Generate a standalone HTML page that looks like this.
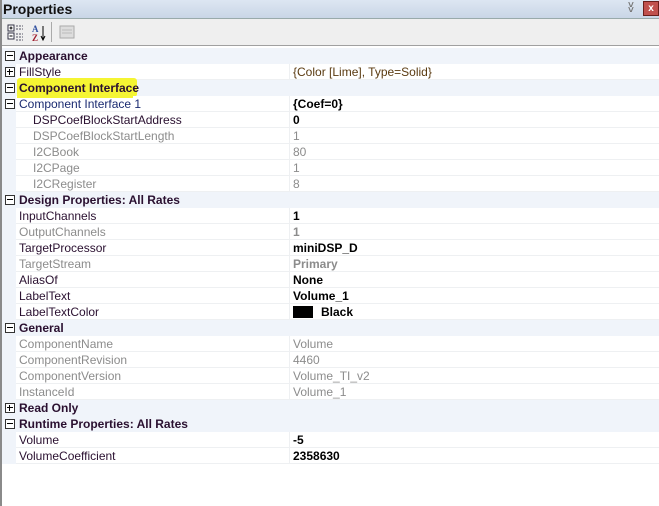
<!DOCTYPE html>
<html><head><meta charset="utf-8"><style>
*{margin:0;padding:0;box-sizing:border-box}
body{width:659px;height:506px;background:#fff;font-family:"Liberation Sans",Arial,sans-serif;font-size:12px;position:relative;overflow:hidden}
#lb{position:absolute;left:0;top:0;width:2px;height:506px;background:#8a8a8a}
#title{position:absolute;left:2px;top:0;width:657px;height:19px;background:linear-gradient(#dde6f2,#c9d6e6);font-size:14px;font-weight:bold;color:#111;padding:1px 0 0 1px;border-bottom:1px solid #9aa}
#tb{position:absolute;left:2px;top:19px;width:657px;height:27px;background:#efefef;border-bottom:1px solid #a0a0a0}
.r{position:absolute;left:2px;width:657px;height:16px;line-height:15px}
.c{background:#f0f4fa;font-weight:bold;color:#000}
.p{background:#fff;border-bottom:1px solid #eef0f2}
.p .g{position:absolute;left:0;top:0;width:14px;height:16px;background:#f0f4fa}
.p .sep{position:absolute;left:287px;top:0;width:1px;height:16px;background:#eef0f2}
.n{position:absolute;left:17px;top:1px;color:#2a1030;white-space:nowrap}
.n2{left:31px}
.v{position:absolute;left:291px;top:1px;color:#000;white-space:nowrap}
.d{color:#8c8c8c!important}
.b{font-weight:bold}
.box{position:absolute;left:3px;top:3px;width:10px;height:10px;border:1px solid #333;background:#fff}
.box:before{content:"";position:absolute;left:1px;top:3px;width:6px;height:1px;background:#000}
.plus:after{content:"";position:absolute;left:3px;top:1px;width:1px;height:6px;background:#000}
</style></head><body>
<div id="lb"></div>
<div id="title">Properties
<div style="position:absolute;left:626px;top:3px;color:#777;font-size:10px;line-height:5px">&#709;<br>&#709;</div>
<div style="position:absolute;left:641px;top:1px;width:16px;height:15px;background:#c0504d;border:1px solid #6a1f1c;color:#fff;font-size:10px;text-align:center;line-height:13px">x</div>
</div>
<div id="tb">
<svg width="80" height="26" style="position:absolute;left:3px;top:1px">
<rect x="3" y="5" width="6" height="6" fill="#fff" stroke="#334"/><rect x="3" y="13" width="6" height="6" fill="#fff" stroke="#334"/>
<path d="M4.5 8h3M6 6.5v3M4.5 16h3" stroke="#000"/>
<path d="M11 6h7M11 9h7M11 14h7M11 17h7M11 20h7" stroke="#556" stroke-dasharray="2 1"/>
<text x="27" y="12" font-size="9" font-family="Liberation Serif" fill="#3050a0" font-weight="bold">A</text>
<text x="27" y="21" font-size="9" font-family="Liberation Serif" fill="#a02030" font-weight="bold">Z</text>
<path d="M38 6v13M36 16l2 4 2-4" stroke="#000" fill="none"/>
<rect x="46" y="2" width="1" height="20" fill="#aaa"/>
<rect x="55" y="6" width="14" height="12" fill="#ddd" stroke="#aaa"/><path d="M57 10h10M57 13h10" stroke="#bbb"/>
</svg>
</div>
<div class="r c" style="top:48px"><div class="box"></div><span class="n">Appearance</span></div>
<div class="r p" style="top:64px"><div class="g"></div><div class="box plus"></div><span class="n">FillStyle</span><div class="sep"></div><span class="v" style="color:#5a3a10">{Color [Lime], Type=Solid}</span></div>
<div class="r c" style="top:80px"><div style="position:absolute;left:15px;top:-2px;width:120px;height:19px;background:#f5f533;border-radius:3px"></div><div class="box"></div><span class="n">Component Interface</span></div>
<div class="r p" style="top:96px"><div class="g"></div><div style="position:absolute;left:15px;top:-1px;width:116px;height:3px;background:#f5f533"></div><div class="box"></div><span class="n" style="color:#1a2a70">Component Interface 1</span><div class="sep"></div><span class="v b">{Coef=0}</span></div>
<div class="r p" style="top:112px"><div class="g"></div><span class="n n2">DSPCoefBlockStartAddress</span><div class="sep"></div><span class="v b">0</span></div>
<div class="r p" style="top:128px"><div class="g"></div><span class="n n2 d">DSPCoefBlockStartLength</span><div class="sep"></div><span class="v d">1</span></div>
<div class="r p" style="top:144px"><div class="g"></div><span class="n n2 d">I2CBook</span><div class="sep"></div><span class="v d">80</span></div>
<div class="r p" style="top:160px"><div class="g"></div><span class="n n2 d">I2CPage</span><div class="sep"></div><span class="v d">1</span></div>
<div class="r p" style="top:176px"><div class="g"></div><span class="n n2 d">I2CRegister</span><div class="sep"></div><span class="v d">8</span></div>
<div class="r c" style="top:192px"><div class="box"></div><span class="n">Design Properties: All Rates</span></div>
<div class="r p" style="top:208px"><div class="g"></div><span class="n">InputChannels</span><div class="sep"></div><span class="v b">1</span></div>
<div class="r p" style="top:224px"><div class="g"></div><span class="n d">OutputChannels</span><div class="sep"></div><span class="v b d">1</span></div>
<div class="r p" style="top:240px"><div class="g"></div><span class="n">TargetProcessor</span><div class="sep"></div><span class="v b">miniDSP_D</span></div>
<div class="r p" style="top:256px"><div class="g"></div><span class="n d">TargetStream</span><div class="sep"></div><span class="v b d">Primary</span></div>
<div class="r p" style="top:272px"><div class="g"></div><span class="n">AliasOf</span><div class="sep"></div><span class="v b">None</span></div>
<div class="r p" style="top:288px"><div class="g"></div><span class="n">LabelText</span><div class="sep"></div><span class="v b">Volume_1</span></div>
<div class="r p" style="top:304px"><div class="g"></div><span class="n">LabelTextColor</span><div class="sep"></div><div style="position:absolute;left:291px;top:2px;width:20px;height:12px;background:#000"></div><span class="v b" style="left:319px">Black</span></div>
<div class="r c" style="top:320px"><div class="box"></div><span class="n">General</span></div>
<div class="r p" style="top:336px"><div class="g"></div><span class="n d">ComponentName</span><div class="sep"></div><span class="v d">Volume</span></div>
<div class="r p" style="top:352px"><div class="g"></div><span class="n d">ComponentRevision</span><div class="sep"></div><span class="v d">4460</span></div>
<div class="r p" style="top:368px"><div class="g"></div><span class="n d">ComponentVersion</span><div class="sep"></div><span class="v d">Volume_TI_v2</span></div>
<div class="r p" style="top:384px"><div class="g"></div><span class="n d">InstanceId</span><div class="sep"></div><span class="v d">Volume_1</span></div>
<div class="r c" style="top:400px"><div class="box plus"></div><span class="n">Read Only</span></div>
<div class="r c" style="top:416px"><div class="box"></div><span class="n">Runtime Properties: All Rates</span></div>
<div class="r p" style="top:432px"><div class="g"></div><span class="n">Volume</span><div class="sep"></div><span class="v b">-5</span></div>
<div class="r p" style="top:448px"><div class="g"></div><span class="n">VolumeCoefficient</span><div class="sep"></div><span class="v b">2358630</span></div>
</body></html>
